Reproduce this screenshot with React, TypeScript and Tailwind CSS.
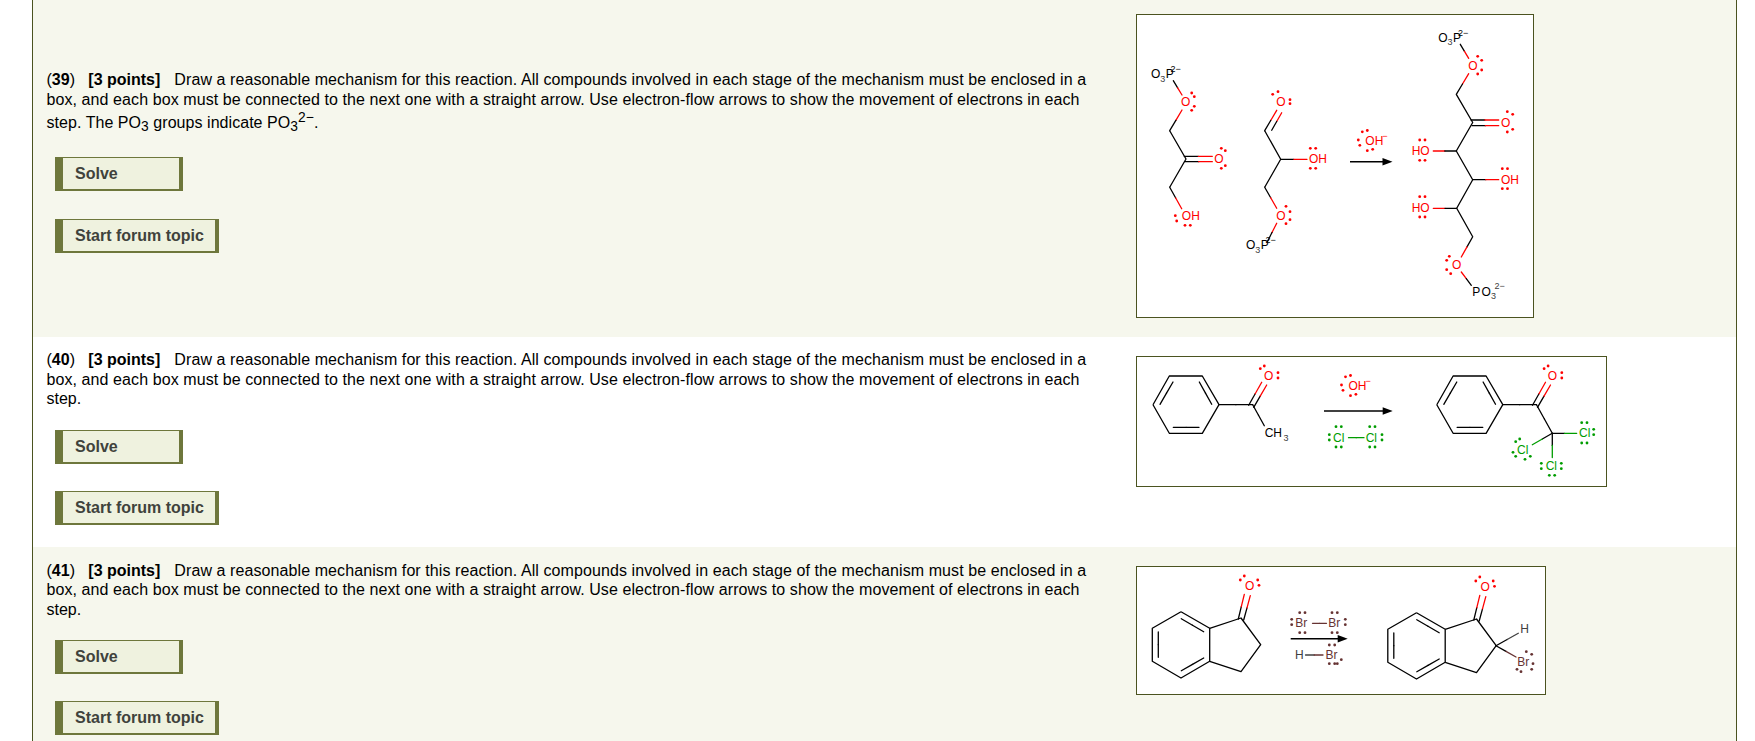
import type { ReactNode } from 'react';

type Point = [number, number];

const BLACK = '#000000';
const RED = '#ff0000';
const GREEN = '#009c00';
const BROWN = '#663333';
const GRAY = '#404040';

/* A bond that changes colour half way, from one atom to the other */
function Bond({ a, b, from = BLACK, to = from }: { a: Point; b: Point; from?: string; to?: string }) {
    const mx = (a[0] + b[0]) / 2;
    const my = (a[1] + b[1]) / 2;

    return (
        <g strokeWidth="1.3" strokeLinecap="round">
            <line x1={a[0]} y1={a[1]} x2={mx} y2={my} stroke={from} />
            <line x1={mx} y1={my} x2={b[0]} y2={b[1]} stroke={to} />
        </g>
    );
}

function Chain({ points }: { points: string }) {
    return <polyline points={points} fill="none" stroke={BLACK} strokeWidth="1.3" strokeLinejoin="round" />;
}

function Dots({ at, color = RED }: { at: Point[]; color?: string }) {
    return (
        <g fill={color}>
            {at.map(([x, y], i) => (
                <circle key={i} cx={x} cy={y} r="1.4" />
            ))}
        </g>
    );
}

function Atom({ x, y, color = RED, children }: { x: number; y: number; color?: string; children: ReactNode }) {
    return <text x={x} y={y} fill={color} fontSize="12">{children}</text>;
}

function Small({ x, y, color = GRAY, children }: { x: number; y: number; color?: string; children: ReactNode }) {
    return <text x={x} y={y} fill={color} fontSize="9">{children}</text>;
}

function Arrow({ x1, x2, y }: { x1: number; x2: number; y: number }) {
    return (
        <g>
            <line x1={x1} y1={y} x2={x2 - 8} y2={y} stroke={BLACK} strokeWidth="1.5" />
            <polygon points={`${x2 - 10},${y - 3.7} ${x2},${y} ${x2 - 10},${y + 3.7}`} fill={BLACK} />
        </g>
    );
}

/* O3P(2-) written right to left, x is the start of the O */
function Phosphate({ x, y }: { x: number; y: number }) {
    return (
        <g>
            <Atom x={x} y={y} color={BLACK}>O</Atom>
            <Small x={x + 9.3} y={y + 3.4}>3</Small>
            <Atom x={x + 14.7} y={y} color={BLACK}>P</Atom>
            <Small x={x + 19.6} y={y - 6.3} color={BLACK}>2−</Small>
        </g>
    );
}

function Hydroxide({ x, y }: { x: number; y: number }) {
    return (
        <g transform={`translate(${x} ${y})`}>
            <Atom x={0} y={0}>OH</Atom>
            <Small x={17} y={-6} color={RED}>−</Small>
            <Dots at={[[-7, -5], [-3, -13.2], [2, -14.5], [-5.5, 0.3], [2, 5.7], [7.4, 4.3]]} />
        </g>
    );
}

function Benzoyl() {
    return (
        <g>
            <Chain points="17,48.7 33.3,20 66.3,20 83,48.7 66.3,77.3 33.3,77.3 17,48.7" />
            <Bond a={[24, 48.3]} b={[37, 26]} />
            <Bond a={[63.3, 26]} b={[75.7, 48.3]} />
            <Bond a={[37.3, 71.3]} b={[63, 71.3]} />
            <Bond a={[83, 48.7]} b={[116.7, 48.7]} />
            <Bond a={[112.7, 49.3]} b={[125.7, 26.3]} to={RED} />
            <Bond a={[117.7, 51.3]} b={[130.7, 29]} to={RED} />
            <Atom x={128} y={23.7}>O</Atom>
            <Dots at={[[124.3, 12.7], [128.3, 10], [142, 16.7], [142, 22]]} />
        </g>
    );
}

function Indanone() {
    return (
        <g>
            <Chain points="45,45.7 73.7,62.3 73.7,95.3 45,112 16.3,95.3 16.3,62.3 45,45.7" />
            <Bond a={[45.3, 52.7]} b={[67.7, 65.7]} />
            <Bond a={[67.7, 92]} b={[45.3, 104.7]} />
            <Bond a={[22.3, 66]} b={[22.3, 91.3]} />
            <Chain points="73.7,62.3 105,52 124.7,78.7 105,105.7 73.7,95.3" />
            <Bond a={[102.3, 53]} b={[108.3, 28.3]} to={RED} />
            <Bond a={[107.7, 54]} b={[114.3, 29.7]} to={RED} />
            <Atom x={109} y={23.7}>O</Atom>
            <Dots at={[[104.3, 14], [108.3, 10], [121.7, 14], [123, 19.3]]} />
        </g>
    );
}

function Scheme({ width, height, children }: { width: number; height: number; children: ReactNode }) {
    return (
        <div className="shrink-0 border border-[#4b5320] bg-white">
            <svg
                width={width - 2}
                height={height - 2}
                viewBox={`1 1 ${width - 2} ${height - 2}`}
                className="block font-['Liberation_Sans',Arial,sans-serif]"
            >
                {children}
            </svg>
        </div>
    );
}

function AldolScheme() {
    return (
        <Scheme width={398} height={304}>
            {/* dihydroxyacetone phosphate */}
            <Phosphate x={15} y={64.3} />
            <Bond a={[37.3, 66.7]} b={[46, 81]} to={RED} />
            <Atom x={45} y={91.7}>O</Atom>
            <Dots at={[[55.7, 79], [58.3, 82.7], [58.3, 92.3], [55.7, 96.3]]} />
            <Bond a={[46, 96]} b={[33.7, 116.7]} from={RED} to={BLACK} />
            <Chain points="33.7,116.7 50,145 33.7,173.3" />
            <Bond a={[48.3, 142.3]} b={[76.3, 142.3]} to={RED} />
            <Bond a={[49, 147.7]} b={[76.3, 147.7]} to={RED} />
            <Atom x={78.3} y={149}>O</Atom>
            <Dots at={[[85.3, 134.3], [89.3, 136.7], [89.3, 151.7], [85.3, 154.3]]} />
            <Bond a={[33.7, 173.3]} b={[45.7, 194.7]} to={RED} />
            <Atom x={45.8} y={206}>OH</Atom>
            <Dots at={[[39.3, 201.7], [40.7, 207], [49, 211.3], [54.3, 211.3]]} />

            {/* glyceraldehyde phosphate */}
            <Atom x={140.3} y={91.7}>O</Atom>
            <Dots at={[[136.7, 80.3], [142, 77.7], [154, 85.7], [154, 89.7]]} />
            <Bond a={[140.7, 96.3]} b={[128.7, 116.7]} from={RED} to={BLACK} />
            <Bond a={[145.7, 98.7]} b={[135.7, 116.3]} from={RED} to={BLACK} />
            <Chain points="128.7,116.7 144.7,145.3 128.7,173.3" />
            <Bond a={[144.7, 145.3]} b={[171, 145.3]} to={RED} />
            <Atom x={173} y={149}>OH</Atom>
            <Dots at={[[174.3, 134.3], [179.7, 134.3], [174.3, 154.3], [179.7, 154.3]]} />
            <Bond a={[128.7, 173.3]} b={[140.7, 194.3]} to={RED} />
            <Atom x={140.3} y={206}>O</Atom>
            <Dots at={[[150, 192.3], [154, 197.7], [154, 205.7], [150, 209.7]]} />
            <Bond a={[140.7, 209.3]} b={[131.3, 227.7]} from={RED} to={BLACK} />
            <Phosphate x={110} y={235.3} />

            <Hydroxide x={229.3} y={131} />
            <Arrow x1={214} x2={256.5} y={147.8} />

            {/* fructose bisphosphate */}
            <Phosphate x={302.3} y={28} />
            <Bond a={[324.3, 30.3]} b={[332.7, 44.3]} to={RED} />
            <Atom x={332.3} y={56}>O</Atom>
            <Dots at={[[341.7, 42.3], [345.7, 46.3], [345.7, 56], [341.7, 60]]} />
            <Bond a={[332.7, 59.7]} b={[320.3, 80.3]} from={RED} to={BLACK} />
            <Chain points="320.3,80.3 336.7,108.5 320.3,137 336.7,165.7 320.7,194.3 336.7,222.7" />
            <Bond a={[335, 106]} b={[362.7, 106]} to={RED} />
            <Bond a={[336, 111.7]} b={[362.7, 111.7]} to={RED} />
            <Atom x={365} y={112.7}>O</Atom>
            <Dots at={[[371.3, 97.7], [376.7, 100.3], [376.7, 115.3], [371.3, 118]]} />
            <Atom x={275.7} y={140.7}>HO</Atom>
            <Bond a={[297.3, 137]} b={[320.3, 137]} from={RED} to={BLACK} />
            <Dots at={[[283.7, 126], [289, 126], [283.7, 146.3], [289, 146.3]]} />
            <Bond a={[336.7, 165.7]} b={[362.7, 165.7]} to={RED} />
            <Atom x={365} y={169.7}>OH</Atom>
            <Dots at={[[366.3, 154.7], [371.5, 154.7], [366.3, 174.7], [371.5, 174.7]]} />
            <Atom x={275.7} y={198}>HO</Atom>
            <Bond a={[297.3, 194.3]} b={[320.7, 194.3]} from={RED} to={BLACK} />
            <Dots at={[[283.7, 182.7], [289, 182.7], [283.7, 203], [289, 203]]} />
            <Bond a={[336.7, 222.7]} b={[325.3, 243]} to={RED} />
            <Atom x={316} y={255}>O</Atom>
            <Dots at={[[313.3, 242.3], [310.7, 246.3], [310.7, 255.7], [314.7, 259.7]]} />
            <Bond a={[325.3, 258]} b={[335.3, 271.3]} from={RED} to={BLACK} />
            <Atom x={336.3} y={282} color={BLACK}>P</Atom>
            <Atom x={345.5} y={282} color={BLACK}>O</Atom>
            <Small x={355} y={284.7}>3</Small>
            <Small x={358.5} y={274.7}>2−</Small>
        </Scheme>
    );
}

function HaloformScheme() {
    return (
        <Scheme width={471} height={131}>
            <Benzoyl />
            <Bond a={[116.7, 48.7]} b={[128.3, 69.7]} />
            <Atom x={128.7} y={81} color={BLACK}>CH</Atom>
            <Small x={147.5} y={85}>3</Small>

            <Hydroxide x={212.5} y={34} />
            <Arrow x1={188} x2={256.7} y={55} />

            <Atom x={197} y={86} color={GREEN}>Cl</Atom>
            <Bond a={[212.5, 81.7]} b={[228, 81.7]} from={GREEN} />
            <Atom x={229.7} y={86} color={GREEN}>Cl</Atom>
            <Dots color={GREEN} at={[[193.3, 78.7], [193.3, 84], [200, 70.7], [205.3, 70.7], [200, 91], [205.3, 91]]} />
            <Dots color={GREEN} at={[[233.7, 70.7], [239, 70.7], [233.7, 91], [239, 91], [246, 78.7], [246, 84]]} />

            <g transform="translate(283.8 0)">
                <Benzoyl />
            </g>
            <Bond a={[400.5, 48.7]} b={[416.3, 77.3]} />
            <Bond a={[416.3, 77.3]} b={[440.7, 77.3]} to={GREEN} />
            <Bond a={[416.3, 77.3]} b={[416.3, 101.5]} to={GREEN} />
            <Bond a={[416.3, 77.3]} b={[396.3, 88.7]} to={GREEN} />
            <Atom x={443} y={81} color={GREEN}>Cl</Atom>
            <Dots color={GREEN} at={[[445.7, 66.7], [451, 66.7], [445.7, 87], [451, 87], [457.7, 73.3], [457.7, 78.7]]} />
            <Atom x={409.7} y={114} color={GREEN}>Cl</Atom>
            <Dots color={GREEN} at={[[405.3, 107.3], [405.3, 112.7], [425.3, 107.3], [425.3, 112.7], [413.3, 119.3], [418.7, 119.3]]} />
            <Atom x={381} y={98} color={GREEN}>Cl</Atom>
            <Dots color={GREEN} at={[[379.7, 85.7], [383.7, 83], [377, 96.3], [379.7, 100.3], [389, 103.3], [394.3, 100.3]]} />
        </Scheme>
    );
}

function BrominationScheme() {
    return (
        <Scheme width={410} height={129}>
            <Indanone />

            <Atom x={159.3} y={60.7} color={BROWN}>Br</Atom>
            <Bond a={[176.5, 57.3]} b={[190.5, 57.3]} from={BROWN} />
            <Atom x={192.3} y={60.7} color={BROWN}>Br</Atom>
            <Dots color={BROWN} at={[[155.7, 53.3], [155.7, 58.7], [163.7, 46.7], [169, 46.7], [163.7, 66.7], [169, 66.7]]} />
            <Dots color={BROWN} at={[[196, 46.7], [201.3, 46.7], [196, 66.7], [201.3, 66.7], [209.3, 53.3], [209.3, 58.7]]} />
            <Arrow x1={154.7} x2={211.7} y={72.7} />
            <Atom x={159} y={92.7} color={GRAY}>H</Atom>
            <Bond a={[169.5, 89]} b={[187, 89]} from={GRAY} to={BROWN} />
            <Atom x={189.5} y={92.7} color={BROWN}>Br</Atom>
            <Dots color={BROWN} at={[[193.3, 79], [198.7, 79], [193.3, 97.7], [198.7, 97.7], [201.3, 97.7], [205.3, 93.7]]} />

            <g transform="translate(235.5 1)">
                <Indanone />
            </g>
            <Bond a={[360, 79.7]} b={[382.3, 67.3]} to={GRAY} />
            <Atom x={384.3} y={67} color={GRAY}>H</Atom>
            <Bond a={[360, 79.7]} b={[380, 91]} to={BROWN} />
            <Atom x={381.2} y={99.7} color={BROWN}>Br</Atom>
            <Dots color={BROWN} at={[[390.3, 85.7], [395.7, 88.3], [397, 97.7], [395.7, 103.3], [381, 103.3], [385, 105.7]]} />
        </Scheme>
    );
}

const BUTTON =
    'block h-[34px] border-t border-r-4 border-b-2 border-l-8 border-[#6e773c] bg-[#eff2df] pl-3 text-left font-bold text-[#40423c]';

function Buttons({ className }: { className: string }) {
    return (
        <div className={`ml-2 flex flex-col items-start ${className}`}>
            <button className={`${BUTTON} w-32`}>Solve</button>
            <button className={`${BUTTON} w-[164px] whitespace-nowrap`}>Start forum topic</button>
        </div>
    );
}

function Prompt({ number, children }: { number: number; children: ReactNode }) {
    return (
        <div className="-ml-[0.5px] whitespace-nowrap leading-[19.7px]">
            <p>
                (<b>{number}</b>)&nbsp;&nbsp; <b>[3 points]</b>&nbsp;&nbsp;{' '}
                <span className="ml-[0.7px] tracking-[0.09px]">
                    Draw a reasonable mechanism for this reaction. All compounds involved in each stage of the mechanism must be
                    enclosed in a
                </span>
            </p>
            <p className="tracking-[0.085px]">
                box, and each box must be connected to the next one with a straight arrow. Use electron-flow arrows to show
                the movement of electrons in each
            </p>
            {children}
        </div>
    );
}

export default function App() {
    return (
        <div className="h-[741px] overflow-hidden bg-white pl-8 font-['Liberation_Sans',Arial,sans-serif] text-base text-black">
            <div className="w-[1705px] border-x border-[#4b5320]">
                <section className="flex h-[337px] bg-[#f6f7ed] pl-[14px]">
                    <div className="w-[1089px] shrink-0 pt-[70px]">
                        <Prompt number={39}>
                            <p className="pt-[3.5px] tracking-[0.05px]">
                                step. The PO<sub className="text-[13.8px]">3</sub> groups indicate PO
                                <sub className="text-[13.8px]">3</sub>
                                <sup className="-top-[0.4em] text-[13.8px]">2−</sup>.
                            </p>
                        </Prompt>
                        <Buttons className="gap-7 pt-[24.4px]" />
                    </div>
                    <div className="pt-[14px]">
                        <AldolScheme />
                    </div>
                </section>

                <section className="flex h-[210px] bg-white pl-[14px]">
                    <div className="w-[1089px] shrink-0 pt-[13px]">
                        <Prompt number={40}>
                            <p>step.</p>
                        </Prompt>
                        <Buttons className="gap-[27px] pt-[21px]" />
                    </div>
                    <div className="pt-[19px]">
                        <HaloformScheme />
                    </div>
                </section>

                <section className="flex h-[194px] bg-[#f6f7ed] pl-[14px]">
                    <div className="w-[1089px] shrink-0 pt-[13.6px]">
                        <Prompt number={41}>
                            <p>step.</p>
                        </Prompt>
                        <Buttons className="gap-[27px] pt-[20.6px]" />
                    </div>
                    <div className="pt-[19px]">
                        <BrominationScheme />
                    </div>
                </section>
            </div>
        </div>
    );
}
